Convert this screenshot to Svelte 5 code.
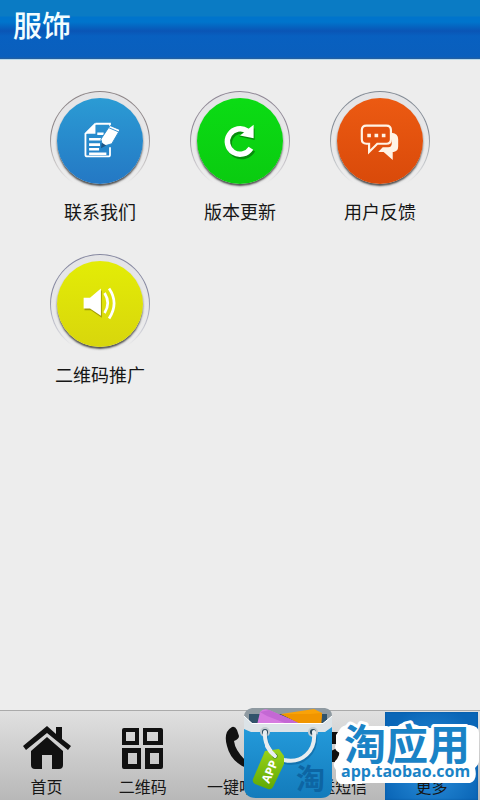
<script>
  const actions = [
    { id: 'contact', label: '联系我们', top: '#2b9bd4', bottom: '#2478c4', ring: '#8d8587' },
    { id: 'update', label: '版本更新', top: '#0bdc14', bottom: '#0acb10', ring: '#8f8795' },
    { id: 'feedback', label: '用户反馈', top: '#ec5a12', bottom: '#d94a0a', ring: '#838b95' },
    { id: 'promote', label: '二维码推广', top: '#e3ec06', bottom: '#d8d60c', ring: '#8587a0' }
  ];
  const tabs = [
    { id: 'home', label: '首页' },
    { id: 'qr', label: '二维码' },
    { id: 'call', label: '一键呼叫' },
    { id: 'sms', label: '发送短信' },
    { id: 'more', label: '更多' }
  ];
  let active = $state('more');
</script>

<div class="screen">
  <header><h1>服饰</h1></header>

  <main>
    {#each actions as a (a.id)}
      <button class="action">
        <span class="ring" style="--edge: {a.ring}">
          <span class="disc" style="background-image: linear-gradient({a.top}, {a.bottom})">
            <svg viewBox="0 0 44 44" aria-hidden="true">
              {#if a.id === 'contact'}
                <path d="M17 3H33V13M17 3L6 14V37Q6 39 8 39H31Q33 39 33 37V29" fill="none" stroke="#fff" stroke-width="2" />
                <path d="M17 3V14H6Z" fill="#fff" />
                <path d="M19 14H26M10 20H24M10 26H22M10 31H21M10 36H29" stroke="#fff" stroke-width="2.800" />
                <path d="M33 5L44 9.500L35 25L25 28L23 20Z" fill="#fff" stroke="#2788c9" stroke-width="1" />
                <path d="M32 7.500L42.500 12" stroke="#2788c9" stroke-width="1" />
                <path d="M23 30L29 27L24 24Z" fill="#1d5688" />
              {:else if a.id === 'update'}
                <g transform="translate(-2 -1)">
                  <path d="M37 31A14 14 0 1 1 32 12" transform="translate(1 2)" fill="none" stroke="#078c0c" stroke-width="6" />
                  <path d="M23 18L40 22V9Z" fill="#078c0c" />
                  <path d="M36 31A14 14 0 1 1 32 12" fill="none" stroke="#fff" stroke-width="6" />
                  <path d="M39 5V20L24 17Z" fill="#fff" />
                </g>
              {:else if a.id === 'feedback'}
                <path d="M35 13Q42 14 42 20V28Q42 33 37 34H36V43L26 34H20L25 29H31Q35 29 35 24Z" fill="#fff3e5" />
                <path d="M7 5H29Q34 5 34 10V20Q34 25 29 25H19L10 34V25H7Q2 25 2 20V10Q2 5 7 5Z" fill="#e3500d" stroke="#fff3e5" stroke-width="2.400" />
                <path d="M8 14h4v4h-4zM16 14h4v4h-4zM24 14h4v4h-4z" fill="#fff3e5" />
              {:else}
                <path d="M4 16H11L23 6V36L11 28H4Z" transform="translate(1 1)" fill="#a19b08" />
                <path d="M4 15H11L23 5V35L11 27H4Z" fill="#fff" />
                <path d="M27 10Q34 21 27 32M32 5Q43 21 32 38" fill="none" stroke="#fff" stroke-width="3" />
              {/if}
            </svg>
          </span>
        </span>
        <span class="caption">{a.label}</span>
      </button>
    {/each}
  </main>

  <nav>
    {#each tabs as t (t.id)}
      <button class="tab" class:active={active === t.id} onclick={() => (active = t.id)}>
        <svg viewBox="0 0 48 44" aria-hidden="true">
          {#if t.id === 'home'}
            <path d="M0 20L24 0L33 8V1H39V13L48 20L45 24L24 7L3 24Z" />
            <path d="M24 11L40 25V39Q40 43 36 43H29V29H19V43H12Q8 43 8 39V25Z" />
          {:else if t.id === 'qr'}
            <path fill-rule="evenodd" d="M5 2H20V19H3V4Q3 2 5 2ZM7 6V15H16V6ZM24 2H42Q44 2 44 4V19H24ZM28 6V15H39V6ZM3 22H22V43H5Q3 43 3 41ZM9 27V38H18V27ZM26 22H44V41Q44 43 42 43H26ZM31 27V38H40V27Z" />
          {:else if t.id === 'call'}
            <path d="M13 1Q16 0 18 4L20 10Q20 13 15 15Q16 24 26 34Q29 30 32 32L40 36Q43 38 40 41Q36 45 30 43Q12 37 8 20Q4 6 13 1Z" transform="translate(4 0)" />
          {:else if t.id === 'sms'}
            <path d="M4 6H28V18H4ZM4 22L16 27L28 21V36H4Z" />
          {/if}
        </svg>
        <span>{t.label}</span>
      </button>
    {/each}
  </nav>

  <svg class="badge" viewBox="240 704 240 96" role="img" aria-label="淘应用 app.taobao.com">
    <defs>
      <linearGradient id="bag" x2="0" y2="1">
        <stop stop-color="#249bdb" />
        <stop offset="1" stop-color="#137bbb" />
      </linearGradient>
      <linearGradient id="tag" x2="0" y2="1">
        <stop stop-color="#9bd319" />
        <stop offset="1" stop-color="#5fa904" />
      </linearGradient>
    </defs>
    <path d="M252 708H325Q332 709 332 716V730H244V716Q245 709 252 708Z" fill="#8f9aa1" />
    <path d="M249 714H327V726H249Z" fill="#31536b" />
    <path d="M257 725L260 712Q263 708 269 710L304 725Z" fill="#d67be0" />
    <path d="M260 712L267 716L290 725H304L269 710Z" fill="#c468d4" />
    <path d="M281 714L314 709L322 713L321 725H303Z" fill="#f9a208" />
    <path d="M281 714L310 714L322 713L321 725H303Z" fill="#f09500" />
    <path d="M244 726H332V786Q332 798 321 798H256Q244 798 244 786Z" fill="url(#bag)" />
    <path d="M244 716L252 723H323L332 716V727L325 732H251L244 729Z" fill="#dce3e7" />
    <path d="M244 716L252 723.500H323L332 716" fill="none" stroke="#fff" />
    <text class="tao" x="296" y="790">淘</text>
    <g fill="#26465a" stroke="#c4ccd1" stroke-width="2">
      <circle cx="265" cy="732" r="4" />
      <circle cx="313" cy="732" r="4" />
    </g>
    <path d="M265 732C264 744 271 756 284 760C302 764 316 751 314 732" transform="translate(1 2)" fill="none" stroke="#0c5c93" stroke-opacity=".5" stroke-width="4" />
    <path d="M265 732C264 744 271 756 284 760C302 764 316 751 314 732" fill="none" stroke="#e8edf0" stroke-width="4" stroke-linecap="round" />
    <path d="M265 751L279 749L284 756V764L273 787Q271 790 268 789L255 784Q252 782 253 779Z" fill="url(#tag)" />
    <circle cx="275" cy="756" r="2.500" fill="#2c6e1c" />
    <path d="M267 746Q270 752 275 756" fill="none" stroke="#e8edf0" stroke-width="4" stroke-linecap="round" />
    <text class="app" transform="translate(269 784) rotate(-67)">APP</text>
    <path d="M340 729Q344 723 351 727Q358 723 368 726H387L395 729Q401 721 409 723Q416 724 424 728H432L437 725H470Q479 726 479 733V760Q479 765 475 768Q478 780 470 783H362V784H342Q337 784 336 778V770Q331 764 337 759L340 753Q333 750 336 744V735Z" fill="#fff" />
    <text class="brand" x="344" y="760">淘应用</text>
    <text class="site" x="341" y="777">app.taobao.com</text>
  </svg>
</div>

<style>
  :global(body) {
    margin: 0;
    background: #ededed;
  }
  .screen {
    position: relative;
    display: flex;
    flex-direction: column;
    min-height: 100vh;
    font-family: "Noto Sans CJK SC", sans-serif;
    color: #161616;
  }
  button {
    margin: 0;
    padding: 0;
    border: 0;
    background: none;
    color: inherit;
    font: inherit;
    cursor: pointer;
  }
  header {
    box-sizing: border-box;
    height: 60px;
    padding: 3px 13px;
    border-bottom: 1px solid #b9d9ea;
    background: linear-gradient(#0a7bc4 16px, #0074cc 17px, #0074cc 22px, #0a55b5 31px, #0860c0 36px, #0a5fbd 57px, #2a5e98 59px);
  }
  h1 {
    margin: 0;
    color: #f2fdff;
    font-size: 29px;
    font-weight: 500;
    line-height: 42px;
  }
  main {
    flex: 1;
    display: grid;
    grid-template-columns: repeat(3, 1fr);
    align-content: start;
    row-gap: 30px;
    padding: 31px 30px;
  }
  .action {
    display: flex;
    flex-direction: column;
    align-items: center;
    gap: 7px;
  }
  .ring {
    box-sizing: border-box;
    display: flex;
    align-items: center;
    justify-content: center;
    width: 100px;
    height: 100px;
    border: 1px solid transparent;
    border-radius: 50%;
    background:
      linear-gradient(#e4e4e6, #ededed) padding-box,
      linear-gradient(var(--edge) 40%, #ededed 92%) border-box;
  }
  .disc {
    display: flex;
    align-items: center;
    justify-content: center;
    width: 86px;
    height: 86px;
    border-radius: 50%;
    box-shadow: 0 2px 2px rgba(40, 40, 40, 0.8);
  }
  .disc svg {
    width: 40px;
    height: 40px;
  }
  .caption {
    font-size: 18px;
    line-height: 26px;
  }
  nav {
    box-sizing: border-box;
    display: flex;
    gap: 3px;
    height: 90px;
    padding: 1px 2px 0 0;
    border-top: 1px solid #aaa;
    background: linear-gradient(#e0e0e0, #b8b8b8);
  }
  .tab {
    flex: 1;
    display: flex;
    flex-direction: column;
    align-items: center;
    padding-top: 14px;
    font-size: 16px;
    line-height: 32px;
  }
  .tab svg {
    flex: none;
    width: 48px;
    height: 44px;
    fill: #111;
  }
  .active {
    background: radial-gradient(ellipse at 50% 60%, #2d91dc, #0a66b7 80%);
    box-shadow: inset 0 0 2px #07549b;
  }
  .badge {
    position: absolute;
    right: 0;
    bottom: 0;
    width: 240px;
    height: 96px;
    pointer-events: none;
  }
  .tao {
    fill: #0d65a3;
    font-size: 29px;
    font-weight: 700;
  }
  .app {
    fill: #fff;
    font: bold 12px "Open Sans", sans-serif;
  }
  .brand {
    fill: #1a83c6;
    stroke: #fff;
    stroke-width: 6px;
    stroke-linejoin: round;
    paint-order: stroke;
    font-size: 42px;
    font-weight: 700;
  }
  .site {
    fill: #1a83c6;
    font: bold 16px "Open Sans", sans-serif;
  }
</style>
